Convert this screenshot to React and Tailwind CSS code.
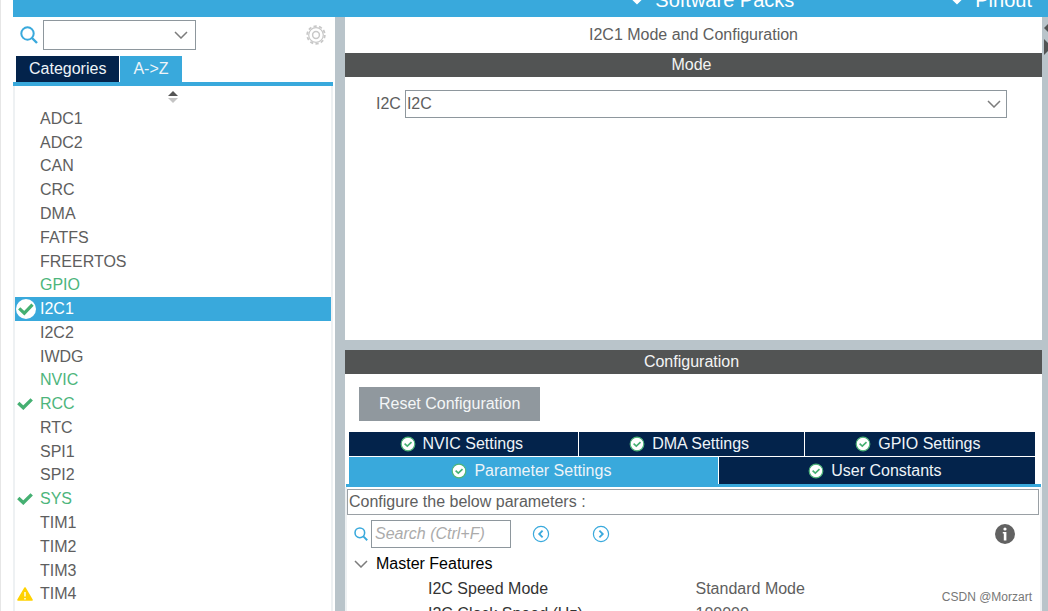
import { useState } from "react";
import clsx from "clsx";

const MENUS = ["Software Packs", "Pinout"];

const PERIPHERALS = [
  { name: "ADC1" },
  { name: "ADC2" },
  { name: "CAN" },
  { name: "CRC" },
  { name: "DMA" },
  { name: "FATFS" },
  { name: "FREERTOS" },
  { name: "GPIO", active: true },
  { name: "I2C1", active: true, status: "ok" },
  { name: "I2C2" },
  { name: "IWDG" },
  { name: "NVIC", active: true },
  { name: "RCC", active: true, status: "ok" },
  { name: "RTC" },
  { name: "SPI1" },
  { name: "SPI2" },
  { name: "SYS", active: true, status: "ok" },
  { name: "TIM1" },
  { name: "TIM2" },
  { name: "TIM3" },
  { name: "TIM4", status: "warning" },
  { name: "USART1", active: true, status: "ok" },
];

const PARAMETERS = [
  { name: "I2C Speed Mode", value: "Standard Mode" },
  { name: "I2C Clock Speed (Hz)", value: "100000" },
];

// ─── Icons ───────────────────────────────────────────────────────────────────
function SearchIcon({ className }) {
  return (
    <svg className={className} viewBox="0 0 18 18" fill="none" stroke="#39a9dc" strokeWidth="2">
      <circle cx="7.5" cy="7.5" r="6.2" />
      <path d="M12 12l5 5" strokeWidth="2.4" />
    </svg>
  );
}

function GearIcon() {
  return (
    <svg className="w-5 h-5" viewBox="0 0 20 20" fill="none" stroke="#c8c8c8" strokeLinejoin="round">
      <circle cx="10" cy="10" r="8.8" strokeWidth="1.8" strokeDasharray="3.2 2.33" />
      <circle cx="10" cy="10" r="7.3" strokeWidth="1.2" />
      <circle cx="10" cy="10" r="3.4" strokeWidth="1.5" />
    </svg>
  );
}

function ChevronDown({ className }) {
  return (
    <svg className={className} viewBox="0 0 14 8" fill="none" stroke="#7c7c7c" strokeWidth="1.5">
      <path d="M1 1l6 6 6-6" />
    </svg>
  );
}

function MenuChevron() {
  return (
    <svg className="w-3 h-[10px]" viewBox="0 0 12 10" fill="none" stroke="white" strokeWidth="3">
      <path d="M1 2.5l5 5 5-5" />
    </svg>
  );
}

function CheckMark() {
  return (
    <svg className="w-4 h-3" viewBox="0 0 16 12" fill="none" stroke="#45b072" strokeWidth="3.4">
      <path d="M1.3 5l5 4.7L14.7 1.4" />
    </svg>
  );
}

function SelectedMark() {
  return (
    <svg className="w-5 h-5" viewBox="0 0 20 20" fill="none">
      <circle cx="10" cy="10" r="10" fill="white" />
      <path d="M3.2 9.4l5.1 4.8 8.2-8.5" stroke="#45b072" strokeWidth="3.2" />
    </svg>
  );
}

function WarningMark() {
  return (
    <svg className="w-4 h-4" viewBox="0 0 16 16">
      <path d="M8 2l7 12H1z" fill="#ffd200" stroke="#ffd200" strokeWidth="1.6" strokeLinejoin="round" />
      <path d="M8 6v4.5M8 12v1.4" stroke="white" strokeWidth="1.4" />
    </svg>
  );
}

function TabMark() {
  return (
    <svg className="w-4 h-4" viewBox="0 0 16 16" fill="none">
      <circle cx="8" cy="8" r="6.8" fill="white" stroke="#4fb57a" strokeWidth="1.2" />
      <path d="M4.6 7.6l2.7 2.6 4.2-4" stroke="#45b072" strokeWidth="1.6" />
    </svg>
  );
}

function StepIcon({ d }) {
  return (
    <svg className="w-[18px] h-[18px]" viewBox="0 0 18 18" fill="none" stroke="#39a9dc">
      <circle cx="9" cy="9" r="7.6" strokeWidth="1.2" />
      <path d={d} strokeWidth="1.8" />
    </svg>
  );
}

function InfoIcon() {
  return (
    <svg className="w-5 h-5" viewBox="0 0 20 20">
      <circle cx="10" cy="10" r="10" fill="#626262" />
      <circle cx="10" cy="5" r="1.6" fill="white" />
      <path d="M7.8 8h3.6v8.4H8.8V9.4h-1z" fill="white" />
    </svg>
  );
}

// ─── Sidebar ─────────────────────────────────────────────────────────────────
function PeripheralItem({ item, selected, onSelect }) {
  return (
    <li className="grid">
      <button
        onClick={() => onSelect(item.name)}
        className={clsx(
          "flex items-center text-left leading-none",
          selected ? "bg-[#39a9dc] text-white" : item.active ? "text-[#4db57c]" : "text-[#5e5e5e]"
        )}
      >
        <span className={clsx("flex w-[25px]", selected ? "pl-px" : "pl-[2px]")}>
          {selected ? <SelectedMark /> : item.status === "ok" ? <CheckMark /> : item.status === "warning" ? <WarningMark /> : null}
        </span>
        {item.name}
      </button>
    </li>
  );
}

function Sidebar({ selected, onSelect }) {
  const [tab, setTab] = useState("A->Z");

  return (
    <aside className="flex w-[322px] shrink-0 flex-col overflow-hidden pr-[2px]">
      <div className="flex items-center px-[7px] pt-[3px]">
        <label htmlFor="peripheral-search" aria-label="Search peripherals">
          <SearchIcon className="w-[18px] h-[18px]" />
        </label>
        <div className="relative ml-[5px]">
          <select id="peripheral-search" className="block h-[30px] w-[153px] appearance-none border border-[#8e979d] bg-white pl-1">
            <option></option>
          </select>
          <ChevronDown className="pointer-events-none absolute top-[11px] right-2 w-[14px] h-2" />
        </div>
        <button aria-label="Settings" className="ml-auto">
          <GearIcon />
        </button>
      </div>

      <div className="mt-[6px] flex gap-px border-b-4 border-[#39a9dc] pl-[3px]" role="tablist">
        {["Categories", "A->Z"].map((name) => (
          <button
            key={name}
            role="tab"
            aria-selected={tab === name}
            onClick={() => setTab(name)}
            className={clsx("h-[26px] px-[13px] leading-[26px] text-[#eef4f8]", tab === name ? "bg-[#39a9dc]" : "bg-[#03234b]")}
          >
            {name}
          </button>
        ))}
      </div>

      <div className="border-x-2 border-[#eef1f3]">
        <button aria-label="Sort" className="flex h-[21px] w-full items-center justify-center">
          <svg className="w-[10px] h-[14px]" viewBox="0 0 10 14">
            <path d="M0 6l5-5 5 5z" fill="#555" />
            <path d="M0 8h10l-5 5z" fill="#c4c4c4" />
          </svg>
        </button>
        <ul className="grid h-[523px] auto-rows-fr">
          {PERIPHERALS.map((item) => (
            <PeripheralItem key={item.name} item={item} selected={item.name === selected} onSelect={onSelect} />
          ))}
        </ul>
      </div>
    </aside>
  );
}

// ─── Mode ────────────────────────────────────────────────────────────────────
function SectionBar({ children }) {
  return <h2 className="h-6 bg-[#525454] pr-1 text-center leading-6 text-[#f4f4f4]">{children}</h2>;
}

function ModePanel({ peripheral }) {
  return (
    <section className="h-[323px] shrink-0 bg-white">
      <h1 className="h-9 text-center leading-9">{peripheral} Mode and Configuration</h1>
      <SectionBar>Mode</SectionBar>
      <div className="flex items-center gap-1 pt-[13px] pr-[35px] pl-[31px]">
        <label htmlFor="i2c-mode">I2C</label>
        <div className="relative flex-1">
          <select id="i2c-mode" className="block h-7 w-full appearance-none border border-[#8e979d] bg-white pl-px">
            <option>I2C</option>
            <option>Disable</option>
            <option>SMBus-Alert-mode</option>
          </select>
          <ChevronDown className="pointer-events-none absolute top-[10px] right-[6px] w-[14px] h-2" />
        </div>
      </div>
    </section>
  );
}

// ─── Configuration ───────────────────────────────────────────────────────────
function SettingsTab({ name, current, onSelect }) {
  const selected = name === current;
  return (
    <button
      role="tab"
      aria-selected={selected}
      onClick={() => onSelect(name)}
      className={clsx(
        "flex flex-auto items-center justify-center gap-[7px] pr-1 leading-6 text-[#eef4f8]",
        selected ? "bg-[#39a9dc]" : "bg-[#03234b]"
      )}
    >
      <TabMark />
      {name}
    </button>
  );
}

function ParameterTable() {
  const [open, setOpen] = useState(true);
  return (
    <table className="mt-[3px] w-full table-fixed text-left">
      <thead>
        <tr>
          <th colSpan={2} className="h-[25px] p-0 font-normal text-black">
            <button onClick={() => setOpen(!open)} className="flex items-center gap-2 pl-[7px] leading-6">
              <ChevronDown className={clsx("w-[14px] h-2", !open && "-rotate-90")} />
              Master Features
            </button>
          </th>
        </tr>
      </thead>
      {open && (
        <tbody>
          {PARAMETERS.map((param) => (
            <tr key={param.name}>
              <td className="h-[25px] w-1/2 p-0 pl-[81px] leading-6 text-[#333]">{param.name}</td>
              <td className="h-[25px] p-0 pl-[2px] leading-6">{param.value}</td>
            </tr>
          ))}
        </tbody>
      )}
    </table>
  );
}

function ConfigurationPanel() {
  const [tab, setTab] = useState("Parameter Settings");

  return (
    <section className="flex-1 overflow-hidden bg-white">
      <SectionBar>Configuration</SectionBar>
      <button className="mt-[13px] ml-[14px] block h-[34px] bg-[#90989e] px-5 leading-[34px] text-[#f4f6f7]">Reset Configuration</button>

      <div role="tablist" className="mt-[11px] mr-px ml-px border-b-[3px] border-[#39a9dc] pr-[6px] pl-[3px]">
        <div className="flex h-6 gap-px">
          <SettingsTab name="NVIC Settings" current={tab} onSelect={setTab} />
          <SettingsTab name="DMA Settings" current={tab} onSelect={setTab} />
          <SettingsTab name="GPIO Settings" current={tab} onSelect={setTab} />
        </div>
        <div className="mt-px grid h-[27px] grid-cols-[7fr_6fr] gap-px">
          <SettingsTab name="Parameter Settings" current={tab} onSelect={setTab} />
          <SettingsTab name="User Constants" current={tab} onSelect={setTab} />
        </div>
      </div>

      <div className="border-x-2 border-[#eef1f3] pt-[2px]">
        <p className="mr-px h-[26px] border border-[#9aa0a5] pl-px leading-6">Configure the below parameters :</p>
        <div className="mt-[5px] flex items-center pr-[25px] pl-[7px]">
          <label htmlFor="parameter-search" aria-label="Search parameters">
            <SearchIcon className="w-[14px] h-[14px]" />
          </label>
          <input
            id="parameter-search"
            type="text"
            placeholder="Search (Ctrl+F)"
            className="ml-[3px] h-7 w-[140px] border border-[#8e979d] px-[3px] placeholder:text-[#ababab] placeholder:italic"
          />
          <button aria-label="Previous match" className="ml-[21px]">
            <StepIcon d="M10.6 5.6L7.2 9l3.4 3.4" />
          </button>
          <button aria-label="Next match" className="ml-[42px]">
            <StepIcon d="M7.4 5.6L10.8 9l-3.4 3.4" />
          </button>
          <button aria-label="Information" className="ml-auto">
            <InfoIcon />
          </button>
        </div>
        <ParameterTable />
      </div>
    </section>
  );
}

function App() {
  const [selected, setSelected] = useState("I2C1");

  return (
    <div className="relative flex h-screen flex-col overflow-hidden border-l border-[#e6e6e6] bg-white pl-3 font-['Liberation_Sans',Arial,sans-serif] text-base text-[#5e5e5e]">
      <nav className="flex h-[17px] shrink-0 items-end justify-end gap-[157px] overflow-hidden bg-[#39a9dc] pr-4">
        {MENUS.map((name) => (
          <button key={name} className="flex items-center gap-3 text-xl leading-[34px] text-white">
            <MenuChevron />
            {name}
          </button>
        ))}
      </nav>

      <div className="flex min-h-0 flex-1 bg-[#b9c4ca]">
        <div className="flex bg-white">
          <Sidebar selected={selected} onSelect={setSelected} />
        </div>
        <main className="ml-[10px] flex min-w-0 flex-1 flex-col gap-[10px]">
          <ModePanel peripheral={selected} />
          <ConfigurationPanel />
        </main>
        <div className="w-[6px] shrink-0 overflow-hidden pt-1 pl-[2px]">
          <svg className="w-4 h-9" viewBox="0 0 16 36" fill="#525454">
            <path d="M0 7l8-8v16z" />
            <path d="M0 18l8 8-8 8z" />
          </svg>
        </div>
      </div>

      <span className="absolute right-4 bottom-[6px] text-xs text-[#777]">CSDN @Morzart</span>
    </div>
  );
}

export default App;
